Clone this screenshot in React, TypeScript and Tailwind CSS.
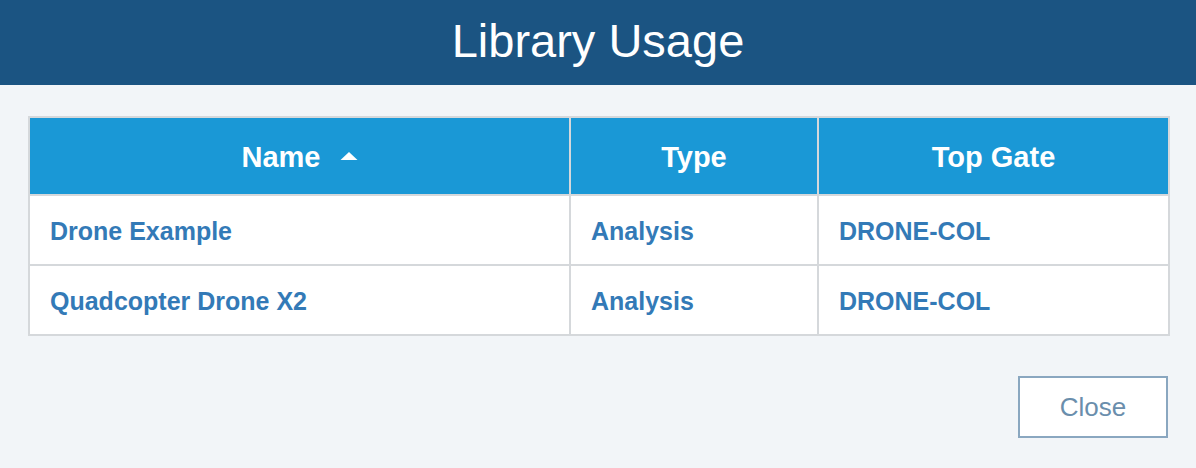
import React from 'react'

const rows = [
  { name: 'Drone Example', type: 'Analysis', gate: 'DRONE-COL' },
  { name: 'Quadcopter Drone X2', type: 'Analysis', gate: 'DRONE-COL' },
]

export default function App() {
  return (
    <div className="w-[1196px] h-[468px] bg-[#f2f5f8] font-['Liberation_Sans',Arial,sans-serif] flex flex-col">
      <div className="h-[85px] bg-[#1b5482] flex items-center justify-center">
        <h1 className="text-white text-[47px] leading-none font-normal mt-[-5px]">Library Usage</h1>
      </div>

      <div className="px-[28px] pt-[31px]">
        <table className="w-[1140px] border-collapse border-2 border-[#d5d8db] bg-white table-fixed">
          <colgroup>
            <col className="w-[541px]" />
            <col className="w-[248px]" />
            <col className="w-[351px]" />
          </colgroup>
          <thead>
            <tr className="bg-[#1a98d6] h-[78px]">
              <th className="border-2 border-[#d5d8db] pt-[4px] text-white text-[29px] font-bold text-center">
                <span className="inline-flex items-center gap-[19px]">
                  Name
                  <svg width="18" height="8" viewBox="0 0 18 8" className="mt-[-4px]">
                    <path d="M0.5 8 L9 0 L17.5 8 Z" fill="white" />
                  </svg>
                </span>
              </th>
              <th className="border-2 border-[#d5d8db] pt-[4px] text-white text-[29px] font-bold text-center">Type</th>
              <th className="border-2 border-[#d5d8db] pt-[4px] text-white text-[29px] font-bold text-center">Top Gate</th>
            </tr>
          </thead>
          <tbody>
            {rows.map((r) => (
              <tr key={r.name} className="h-[70px]">
                <td className="border-2 border-[#d5d8db] pl-[20px] pt-[4px] text-[25px] font-bold text-[#337ab7]">{r.name}</td>
                <td className="border-2 border-[#d5d8db] pl-[20px] pt-[4px] text-[25px] font-bold text-[#337ab7]">{r.type}</td>
                <td className="border-2 border-[#d5d8db] pl-[20px] pt-[4px] text-[25px] font-bold text-[#337ab7]">{r.gate}</td>
              </tr>
            ))}
          </tbody>
        </table>
      </div>

      <div className="flex justify-end px-[28px] pt-[40px]">
        <button className="w-[150px] h-[62px] bg-white border-2 border-[#8aa7c0] text-[#6a8eac] text-[26px] font-normal">
          Close
        </button>
      </div>
    </div>
  )
}
